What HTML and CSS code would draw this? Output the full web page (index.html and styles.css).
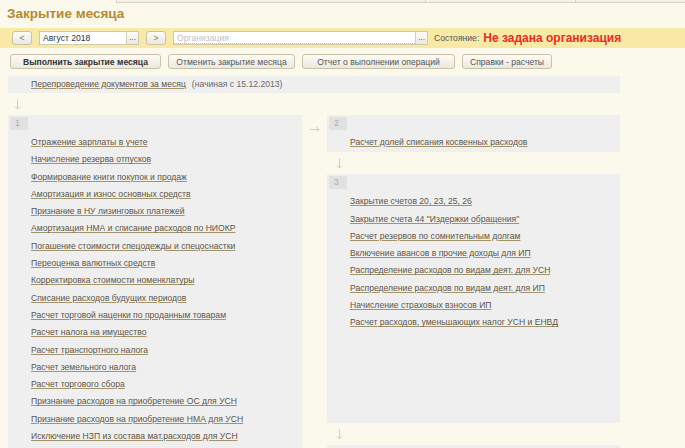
FILE: index.html
```html
<!DOCTYPE html>
<html lang="ru">
<head>
<meta charset="utf-8">
<title>Закрытие месяца</title>
<link rel="stylesheet" href="styles.css">
</head>
<body>
<div class="topstrip"><span class="ts ts1"></span><span class="ts ts2"></span><span class="ts ts3"></span></div>
<h1 class="title">Закрытие месяца</h1>
<div class="toolbar">
  <button class="btn nav">&lt;</button>
  <div class="field date"><span class="val">Август 2018</span><span class="dots">...</span></div>
  <button class="btn nav">&gt;</button>
  <div class="field org"><span class="ph">Организация</span><span class="dots">...</span></div>
  <span class="state-label">Состояние:</span>
  <span class="state">Не задана организация</span>
</div>
<div class="actions">
  <button class="btn act primary">Выполнить закрытие месяца</button>
  <button class="btn act cancel">Отменить закрытие месяца</button>
  <button class="btn act report">Отчет о выполнении операций</button>
  <button class="btn act refs">Справки - расчеты</button>
</div>
<div class="content">
  <div class="repost"><a class="link">Перепроведение документов за месяц</a><span class="note">(начиная с 15.12.2013)</span></div>
  <div class="down down-left"><svg width="7" height="11" viewBox="0 0 7 11"><path d="M3.5 0.5V10M1 7.5L3.5 10L6 7.5" fill="none" stroke="#d2cdb9" stroke-width="1"/></svg></div>
  <div class="flow">
    <div class="col">
      <div class="block b1">
        <div class="num">1</div>
        <ul class="items">
          <li><a class="link">Отражение зарплаты в учете</a></li>
          <li><a class="link">Начисление резерва отпусков</a></li>
          <li><a class="link">Формирование книги покупок и продаж</a></li>
          <li><a class="link">Амортизация и износ основных средств</a></li>
          <li><a class="link">Признание в НУ лизинговых платежей</a></li>
          <li><a class="link">Амортизация НМА и списание расходов по НИОКР</a></li>
          <li><a class="link">Погашение стоимости спецодежды и спецоснастки</a></li>
          <li><a class="link">Переоценка валютных средств</a></li>
          <li><a class="link">Корректировка стоимости номенклатуры</a></li>
          <li><a class="link">Списание расходов будущих периодов</a></li>
          <li><a class="link">Расчет торговой наценки по проданным товарам</a></li>
          <li><a class="link">Расчет налога на имущество</a></li>
          <li><a class="link">Расчет транспортного налога</a></li>
          <li><a class="link">Расчет земельного налога</a></li>
          <li><a class="link">Расчет торгового сбора</a></li>
          <li><a class="link">Признание расходов на приобретение ОС для УСН</a></li>
          <li><a class="link">Признание расходов на приобретение НМА для УСН</a></li>
          <li><a class="link">Исключение НЗП из состава мат.расходов для УСН</a></li>
        </ul>
      </div>
    </div>
    <div class="right-arrow"><svg width="10" height="7" viewBox="0 0 10 7"><path d="M0 3.5H9M6.5 1L9 3.5L6.5 6" fill="none" stroke="#d2cdb9" stroke-width="1"/></svg></div>
    <div class="col">
      <div class="block">
        <div class="num">2</div>
        <ul class="items">
          <li><a class="link">Расчет долей списания косвенных расходов</a></li>
        </ul>
      </div>
      <div class="down down-right"><svg width="7" height="11" viewBox="0 0 7 11"><path d="M3.5 0.5V10M1 7.5L3.5 10L6 7.5" fill="none" stroke="#d2cdb9" stroke-width="1"/></svg></div>
      <div class="block b3">
        <div class="num">3</div>
        <ul class="items">
          <li><a class="link">Закрытие счетов 20, 23, 25, 26</a></li>
          <li><a class="link">Закрытие счета 44 "Издержки обращения"</a></li>
          <li><a class="link">Расчет резервов по сомнительным долгам</a></li>
          <li><a class="link">Включение авансов в прочие доходы для ИП</a></li>
          <li><a class="link">Распределение расходов по видам деят. для УСН</a></li>
          <li><a class="link">Распределение расходов по видам деят. для ИП</a></li>
          <li><a class="link">Начисление страховых взносов ИП</a></li>
          <li><a class="link">Расчет расходов, уменьшающих налог УСН и ЕНВД</a></li>
        </ul>
      </div>
      <div class="down down-right"><svg width="7" height="11" viewBox="0 0 7 11"><path d="M3.5 0.5V10M1 7.5L3.5 10L6 7.5" fill="none" stroke="#d2cdb9" stroke-width="1"/></svg></div>
      <div class="block b4"></div>
    </div>
  </div>
</div>
</body>
</html>
```

FILE: styles.css
```css
* { box-sizing: border-box; }
html, body { margin: 0; padding: 0; }
body {
  width: 685px;
  height: 448px;
  overflow: hidden;
  background: #fbf9ec;
  font-family: "Liberation Sans", Arial, sans-serif;
  font-size: 8.6px;
  color: #4a4a4a;
}
.topstrip {
  height: 3px;
  display: flex;
  padding-left: 116px;
}
.ts { height: 3px; border-bottom: 1px solid #d6d1be; border-left: 1px solid #d6d1be; background: #f5f3e9; }
.ts1 { width: 309px; }
.ts2 { width: 150px; }
.ts3 { flex: 1; }
.title {
  margin: 1px 0 0;
  padding-left: 7px;
  height: 20px;
  line-height: 20px;
  font-size: 13.5px;
  font-weight: bold;
  color: #b8892e;
}
.toolbar {
  margin-top: 4px;
  height: 20px;
  background: #f9e9a6;
  display: flex;
  align-items: center;
  padding-left: 12px;
}
.btn {
  font-family: inherit;
  font-size: 8.6px;
  border: 1px solid #c9c2a9;
  border-radius: 3px;
  background: linear-gradient(#fdfcf7, #ebe8dc);
  color: #555;
  padding: 0;
  margin: 0;
  height: 14px;
  line-height: 12px;
}
.btn.nav { width: 20px; color: #777; }
.field {
  height: 14px;
  display: flex;
  background: #fff;
  border: 1px solid #cfc8b0;
}
.field .val { flex: 1; padding-left: 3px; line-height: 12px; color: #333; }
.field .ph { flex: 1; padding-left: 3px; line-height: 12px; color: #c2c2c2; border-bottom: 1px dotted #e9a6bf; }
.field .dots {
  width: 12px;
  border-left: 1px solid #d6d0ba;
  background: linear-gradient(#fdfcf7, #ebe8dc);
  text-align: center;
  line-height: 10px;
  color: #666;
}
.date { width: 100px; margin-left: 7px; }
.date + .btn.nav { margin-left: 7px; }
.org { width: 255px; margin-left: 7px; }
.state-label { margin-left: 6px; color: #555; }
.state { margin-left: 4px; font-size: 12px; font-weight: bold; color: #ee2b22; }
.actions {
  margin-top: 6px;
  height: 14px;
  display: flex;
  padding-left: 10px;
  gap: 7px;
}
.btn.act { height: 15px; padding: 0; color: #555; }
.btn.primary { font-weight: bold; color: #333; width: 151px; }
.btn.cancel { width: 127px; }
.btn.report { width: 153px; }
.btn.refs { width: 90px; }
.content { padding-left: 8px; margin-top: 8px; }
.repost {
  width: 612px;
  height: 17px;
  background: #efefef;
  padding-left: 23px;
  line-height: 17px;
}
.note { margin-left: 6px; color: #6a6a6a; }
.link {
  color: #5e5645;
  text-decoration: underline;
  text-decoration-color: #a3946c;
  text-underline-offset: 1px;
}
.down { height: 22px; display: flex; align-items: center; }
.down-left { padding-left: 6px; }
.down-right { padding-left: 9px; }
.flow { display: flex; align-items: flex-start; }
.col { display: flex; flex-direction: column; }
.col:first-child { width: 294px; }
.col:last-child { width: 293px; }
.right-arrow { width: 25px; padding: 10px 0 0 8px; height: 24px; }
.block { background: #efefef; padding: 2px 0 1px 2px; }
.b1 { padding-bottom: 20px; }
.num {
  width: 18px;
  height: 13px;
  background: #e1e1e1;
  color: #acacac;
  font-size: 8.6px;
  line-height: 13px;
  padding-left: 5px;
}
.items { list-style: none; margin: 4px 0 0; padding: 0 0 0 21px; }
.items li { height: 17.3px; line-height: 17.3px; white-space: nowrap; }
.b3 { height: 249px; }
.b4 { height: 20px; }
```
